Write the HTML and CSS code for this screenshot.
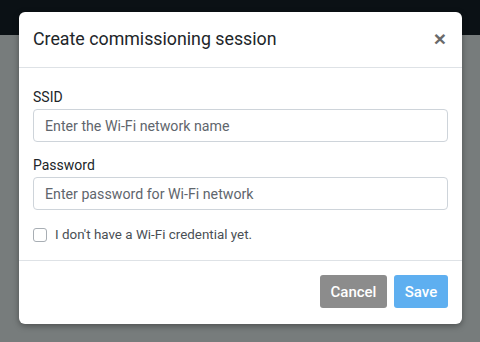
FILE: index.html
```html
<!DOCTYPE html>
<html lang="en">
  <head>
    <meta charset="UTF-8" />
    <meta name="viewport" content="width=device-width, initial-scale=1.0" />
    <title>Create commissioning session</title>
    <link rel="stylesheet" href="styles.css">
  </head>
  <body>
    <div class="topbar"></div>
    <div class="backdrop"></div>

    <!-- Modal -->
    <div class="modal">
      <div class="modalHeader">
        <h5 class="modalTitle">Create commissioning session</h5>
        <button class="closeButton" aria-label="Close">&times;</button>
      </div>
      <div class="modalBody">
        <label class="fieldLabel" for="ssid">SSID</label>
        <input type="text" id="ssid" class="fieldInput" placeholder="Enter the Wi-Fi network name" />
        <label class="fieldLabel" for="password">Password</label>
        <input type="text" id="password" class="fieldInput" placeholder="Enter password for Wi-Fi network" />
        <label class="checkRow">
          <span class="checkBox"></span>
          <span>I don't have a Wi-Fi credential yet.</span>
        </label>
      </div>
      <div class="modalFooter">
        <button class="btn cancelButton">Cancel</button>
        <button class="btn saveButton">Save</button>
      </div>
    </div>
  </body>
</html>
```

FILE: styles.css
```css
html,
body {
  height: 100%;
}
body {
  margin: 0;
  font-family: Roboto, "Liberation Sans", sans-serif;
  color: #212529;
  display: flex;
  flex-direction: column;
  background-color: #777c7c;
}
.topbar {
  height: 35px;
  background-color: #0b1115;
}
.backdrop {
  flex: 1;
}
.modal {
  position: absolute;
  top: 12px;
  left: 19px;
  width: 443px;
  background-color: #fff;
  border-radius: 6px;
  box-shadow: 0 2px 6px rgba(0, 0, 0, 0.35);
}
.modalHeader {
  display: flex;
  align-items: center;
  justify-content: space-between;
  padding: 16px 14px 17px;
  border-bottom: 1px solid #dee2e6;
}
.modalTitle {
  margin: 0;
  font-size: 17.8px;
  font-weight: 400;
  line-height: 22px;
}
.closeButton {
  border: none;
  background: none;
  padding: 0 2px 0 0;
  font-family: "Liberation Sans", sans-serif;
  font-size: 21px;
  font-weight: 700;
  line-height: 22px;
  color: #6a6a6a;
  cursor: pointer;
}
.modalBody {
  display: flex;
  flex-direction: column;
  padding: 19px 14px 14px;
  border-bottom: 1px solid #dee2e6;
}
.fieldLabel {
  font-size: 14px;
  line-height: 20px;
  margin-bottom: 2px;
}
.fieldInput {
  height: 33px;
  box-sizing: border-box;
  padding: 0 11px;
  border: 1px solid #ced4da;
  border-radius: 4px;
  font-family: inherit;
  font-size: 14.2px;
  color: #495057;
  margin-bottom: 13px;
}
.fieldInput::placeholder {
  color: #5f666d;
}
.checkRow {
  display: flex;
  align-items: center;
  gap: 8px;
  font-size: 13.4px;
  line-height: 22px;
  color: #4a4f55;
  margin-top: 1px;
}
.checkBox {
  width: 12px;
  height: 12px;
  border: 1px solid #a8aeb4;
  border-radius: 3px;
}
.modalFooter {
  display: flex;
  justify-content: flex-end;
  gap: 7px;
  padding: 14px 14px 16px;
}
.btn {
  height: 33px;
  border: none;
  border-radius: 3px;
  padding: 0 10px;
  font-family: inherit;
  font-size: 15px;
  font-weight: 500;
  color: #fff;
  cursor: pointer;
}
.cancelButton {
  width: 67px;
  background-color: #8c8c8c;
}
.saveButton {
  width: 54px;
  background-color: #5eaff0;
}
```
